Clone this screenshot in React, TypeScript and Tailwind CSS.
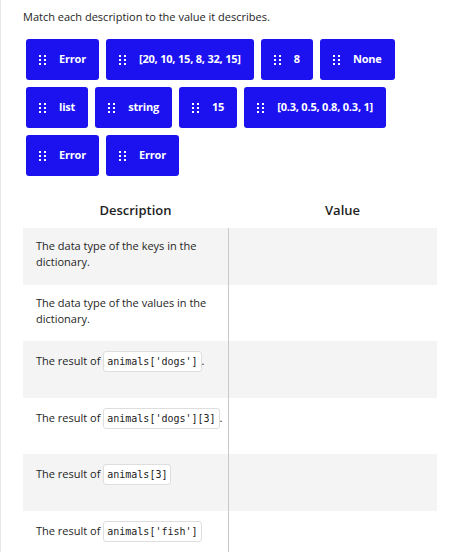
import type { ReactNode } from 'react'

const chips = [
    ['Error', '[20, 10, 15, 8, 32, 15]', '8', 'None'],
    ['list', 'string', '15', '[0.3, 0.5, 0.8, 0.3, 1]'],
    ['Error', 'Error'],
]

function Dots() {
    return (
        <svg width="7" height="10" viewBox="0 0 7 10" className="shrink-0">
            <rect x="0" y="0" width="2" height="2" fill="white" />
            <rect x="5" y="0" width="2" height="2" fill="white" />
            <rect x="0" y="4" width="2" height="2" fill="white" />
            <rect x="5" y="4" width="2" height="2" fill="white" />
            <rect x="0" y="8" width="2" height="2" fill="white" />
            <rect x="5" y="8" width="2" height="2" fill="white" />
        </svg>
    )
}

function Chip({ label }: { label: string }) {
    return (
        <div className="flex h-[41px] items-center gap-[13px] rounded-[3px] bg-[#1b12ef] px-[13px] text-[11px] font-bold tracking-[-0.2px] text-white">
            <Dots />
            <span>{label}</span>
        </div>
    )
}

function Code({ children }: { children: ReactNode }) {
    return (
        <code className="inline-block h-[21px] rounded-[3px] border border-[#dedede] bg-white px-[3px] font-['DejaVu_Sans_Mono',monospace] text-[10px] leading-[19px] text-[#222]">
            {children}
        </code>
    )
}

const rows: ReactNode[] = [
    'The data type of the keys in the dictionary.',
    'The data type of the values in the dictionary.',
    <>The result of <Code>animals['dogs']</Code>.</>,
    <>The result of <Code>animals['dogs'][3]</Code>.</>,
    <>The result of <Code>animals[3]</Code></>,
    <>The result of <Code>animals['fish']</Code></>,
]

export default function App() {
    return (
        <div className="min-h-[552px] border-l border-[#e6e6e6] bg-white font-['Open_Sans',sans-serif] text-[#1e1e1e]">
            <div className="pl-[22px] pt-[9px]">
                <p className="text-[11px] leading-[16px]">Match each description to the value it describes.</p>

                <div className="mt-[14px] flex flex-col gap-[7px] pl-[3px]">
                    {chips.map((row, i) => (
                        <div key={i} className="flex gap-[7px]">
                            {row.map((c, j) => (
                                <Chip key={j} label={c} />
                            ))}
                        </div>
                    ))}
                </div>

                <div className="mt-[17px] w-[414px]">
                    <div className="flex h-[35px] items-center text-[13px] font-semibold">
                        <div className="w-[206px] pl-[19px] text-center">Description</div>
                        <div className="flex-1 pl-[19px] text-center">Value</div>
                    </div>
                    {rows.map((r, i) => (
                        <div key={i} className={`flex h-[56.5px] ${i % 2 === 0 ? 'bg-[#f4f4f4]' : 'bg-white'}`}>
                            <div
                                className={`w-[206px] border-r border-[#c8c8c8] pl-[13px] pr-[8px] pt-[10px] text-[11px] leading-[16px] ${
                                    i > 1 ? 'whitespace-nowrap' : ''
                                }`}
                            >
                                {r}
                            </div>
                            <div className="flex-1" />
                        </div>
                    ))}
                </div>
            </div>
        </div>
    )
}
